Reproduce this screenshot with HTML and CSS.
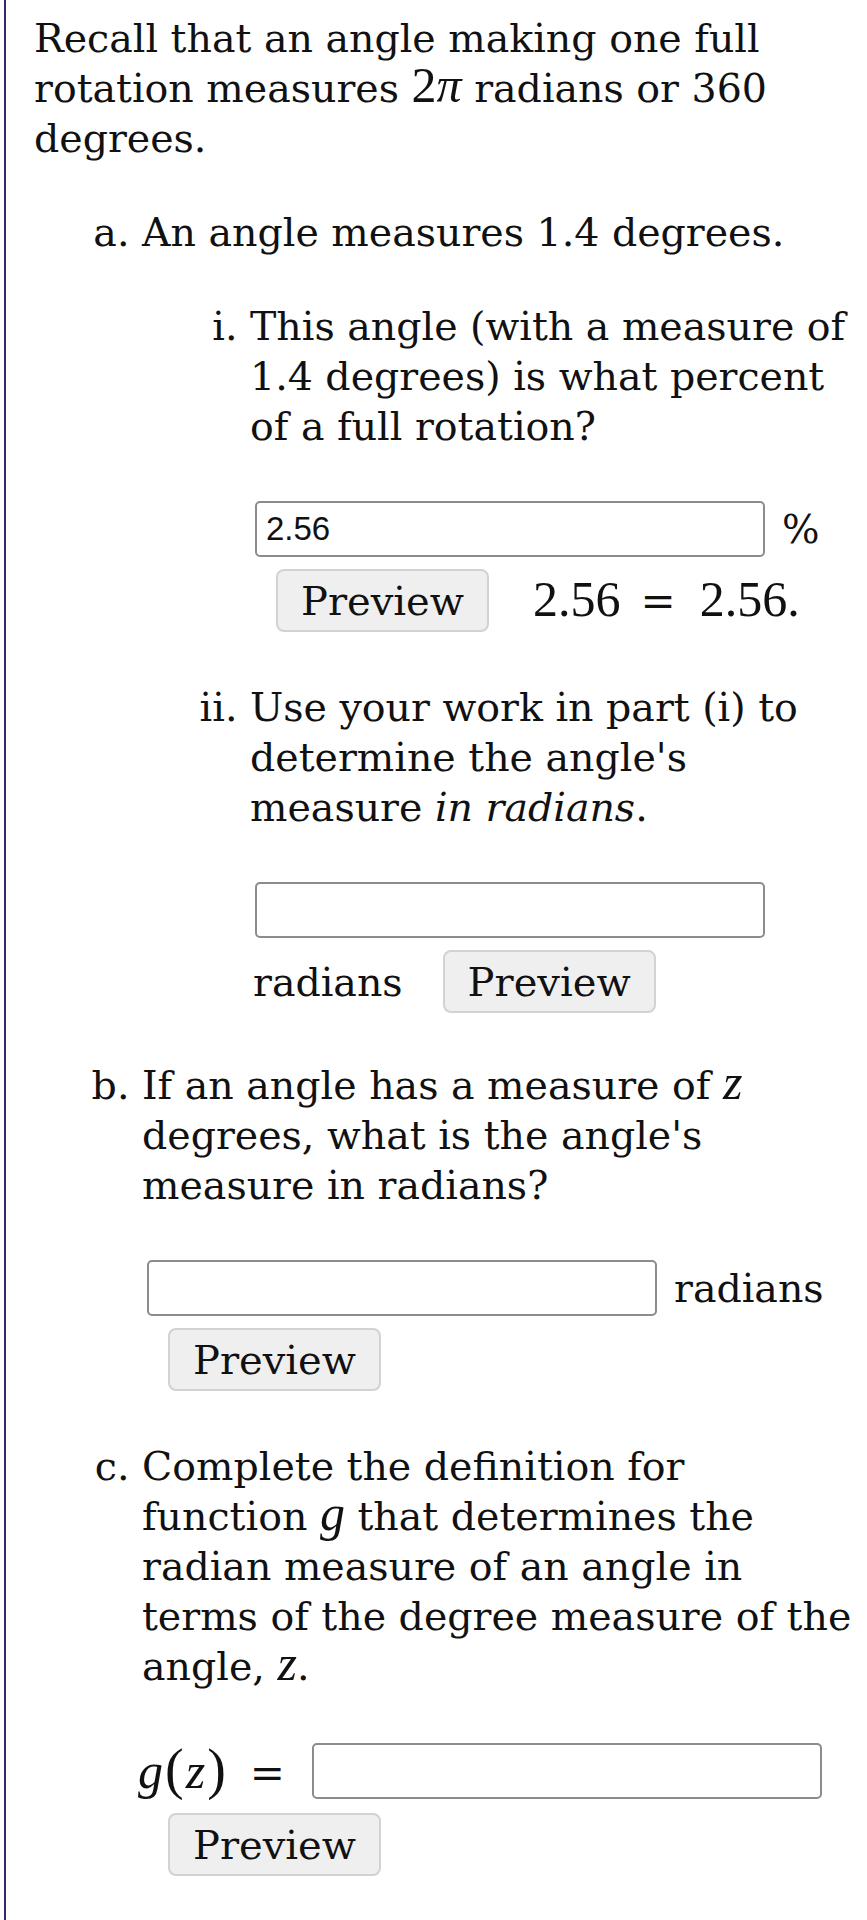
FILE: index.html
```html
<!DOCTYPE html>
<html lang="en">
<head>
  <meta charset="UTF-8" />
  <meta name="viewport" content="width=device-width, initial-scale=1.0"/>
  <title>Radian Measure</title>
  <link rel="stylesheet" href="styles.css">
</head>
<body>
  <div class="problem">
    <p class="intro">
      Recall that an angle making one full rotation measures
      <span class="math">2<i>π</i></span> radians or 360 degrees.
    </p>

    <ol class="parts">
      <li>
        <p class="q">An angle measures 1.4 degrees.</p>

        <ol class="subparts">
          <li>
            <p class="q">This angle (with a measure of 1.4 degrees) is what percent of a full rotation?</p>
            <div class="answer">
              <input type="text" class="ans" value="2.56" />
              <span class="unit">%</span>
              <button type="button" class="preview">Preview</button>
              <span class="math result">
                <span>2.56</span><span class="eq">=</span><span>2.56.</span>
              </span>
            </div>
          </li>
          <li>
            <p class="q">Use your work in part (i) to determine the angle's measure <em>in radians</em>.</p>
            <div class="answer">
              <input type="text" class="ans" value="" />
              <span class="unit">radians</span>
              <button type="button" class="preview">Preview</button>
            </div>
          </li>
        </ol>
      </li>

      <li>
        <p class="q">If an angle has a measure of <span class="math"><i>z</i></span> degrees, what is the angle's measure in radians?</p>
        <div class="answer">
          <input type="text" class="ans" value="" />
          <span class="unit">radians</span>
          <button type="button" class="preview">Preview</button>
        </div>
      </li>

      <li>
        <p class="q">Complete the definition for function <span class="math"><i>g</i></span> that determines the radian measure of an angle in terms of the degree measure of the angle, <span class="math"><i>z</i></span>.</p>
        <div class="answer func-row">
          <span class="math func"><i>g</i><span class="paren">(</span><i>z</i><span class="paren">)</span><span class="eq">=</span></span>
          <input type="text" class="ans" value="" />
          <button type="button" class="preview">Preview</button>
        </div>
      </li>
    </ol>
  </div>
</body>
</html>
```

FILE: styles.css
```css
body {
  margin: 0;
  padding: 0;
  background: #ffffff;
  color: #111;
  font-family: "DejaVu Serif", "Liberation Serif", serif;
  font-size: 39.5px;
  line-height: 50px;
}

.problem {
  margin-left: 4px;
  border-left: 2px solid #2d2d6a;
  padding: 13px 7px 0 28px;
  min-height: 100vh;
  box-sizing: border-box;
}

.intro {
  margin: 0 0 44px;
}

ol {
  margin: 0;
  padding-left: 108px;
}

.parts {
  list-style-type: lower-alpha;
}

.subparts {
  list-style-type: lower-roman;
  margin-top: 44px;
}

li + li {
  margin-top: 50px;
}

.parts > li + li {
  margin-top: 47px;
}

.parts > li:last-child {
  margin-top: 50px;
}

.q {
  margin: 0;
}

em {
  font-style: italic;
}

.math {
  font-family: "Liberation Serif", "Times New Roman", serif;
  font-size: 50px;
}

/* keep inline math from stretching the text lines */
.q .math,
.intro .math {
  line-height: 0;
}

.math i {
  font-style: italic;
}

.answer {
  display: flex;
  flex-wrap: wrap;
  align-items: center;
  column-gap: 14px;
  row-gap: 12px;
  margin-top: 50px;
}

.func-row {
  margin-top: 52px;
  row-gap: 14px;
}

.ans {
  width: 510px;
  height: 56px;
  margin: 0 0 0 5px;
  padding: 0 9px;
  box-sizing: border-box;
  border: 2px solid #8c8c8c;
  border-radius: 5px;
  font-family: "Liberation Sans", Arial, sans-serif;
  font-size: 33px;
  color: #111;
  background: #fff;
}

.unit {
  margin-left: 3px;
}

.preview {
  width: 213px;
  height: 63px;
  margin-left: 26px;
  padding: 0;
  border: 2px solid #d2d2d2;
  border-radius: 8px;
  background: #efefef;
  font-family: "DejaVu Serif", serif;
  font-size: 40px;
  color: #111;
}

.result,
.func {
  line-height: 50px;
}

.result {
  margin-left: 30px;
}

.result .eq {
  margin: 0 24px 0 20px;
}

.eq {
  font-family: "DejaVu Serif", serif;
  font-size: 42px;
}

.func {
  margin-left: -4px;
  margin-right: 8px;
}

.func .paren {
  font-size: 56px;
  margin: 0 2px;
}

.func .eq {
  margin-left: 22px;
}
```
